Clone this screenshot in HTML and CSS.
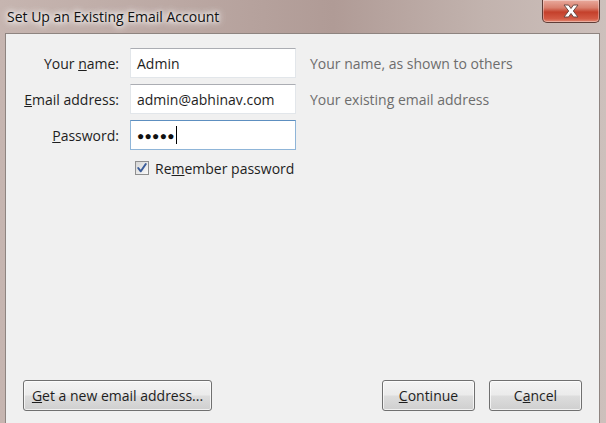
FILE: index.html
```html
<!DOCTYPE html>
<html>
<head>
<meta charset="utf-8">
<link rel="stylesheet" href="styles.css">
</head>
<body>
<div class="window">
  <div class="titlebar">
    <div class="title">Set Up an Existing Email Account</div>
    <div class="close">
      <svg width="20" height="14" viewBox="0 0 20 14">
        <path d="M3 1 H7.5 L10 4.5 L12.5 1 H17 L12.3 7 L17 13 H12.5 L10 9.5 L7.5 13 H3 L7.7 7 Z" fill="#ffffff" stroke="#6a4a44" stroke-width="1" stroke-linejoin="round"/>
      </svg>
    </div>
  </div>
  <div class="frame">
    <div class="panel">
      <div class="form">
        <label class="label">Your <u>n</u>ame:</label>
        <div class="input">Admin</div>
        <div class="hint">Your name, as shown to others</div>

        <label class="label"><u>E</u>mail address:</label>
        <div class="input">admin@abhinav.com</div>
        <div class="hint">Your existing email address</div>

        <label class="label"><u>P</u>assword:</label>
        <div class="input focus"><span class="dots">●●●●●</span><span class="caret"></span></div>
        <div class="hint"></div>

        <div class="empty"></div>
        <div class="check-row">
          <span class="checkbox">
            <svg width="14" height="14" viewBox="0 0 14 14">
              <path d="M3.2 7 L5.8 10.3 L10.8 3" fill="none" stroke="#3a5c9a" stroke-width="2" stroke-linecap="round" stroke-linejoin="round"/>
            </svg>
          </span>
          <span class="check-label">Re<u>m</u>ember password</span>
        </div>
      </div>
      <div class="buttons">
        <button class="btn wide"><u>G</u>et a new email address...</button>
        <div class="right">
          <button class="btn"><u>C</u>ontinue</button>
          <button class="btn">C<u>a</u>ncel</button>
        </div>
      </div>
    </div>
  </div>
</div>
</body>
</html>
```
FILE: styles.css
```css
html, body {
  margin: 0;
  padding: 0;
}
body {
  width: 606px;
  height: 423px;
  overflow: hidden;
  font-family: "Open Sans", "Noto Sans", sans-serif;
  font-size: 14px;
  color: #1e1e1e;
}
.window {
  width: 606px;
  height: 423px;
  display: flex;
  flex-direction: column;
  background: linear-gradient(90deg, #c6b5b0 0%, #bba8a3 30%, #b09b96 55%, #c2b3ae 80%, #cdc0bc 100%);
}
.titlebar {
  height: 33px;
  display: flex;
  align-items: flex-start;
  flex-shrink: 0;
}
.title {
  margin-left: 7px;
  margin-top: 7px;
  font-size: 14px;
  color: #111;
  text-shadow: 0 0 8px #fff, 0 0 8px #fff, 0 0 4px #fff;
}
.close {
  margin-left: auto;
  margin-right: 6px;
  width: 56px;
  height: 22px;
  border: 1px solid #5e3d37;
  border-top: none;
  border-radius: 0 0 5px 5px;
  background: linear-gradient(180deg, #e9aa9d 0%, #d9806e 35%, #c4402b 55%, #d35a44 85%, #e38a74 100%);
  display: flex;
  align-items: center;
  justify-content: center;
  box-shadow: inset 0 0 0 1px rgba(255,255,255,0.35);
}
.frame {
  flex: 1;
  padding: 0 6px 0 5px;
  display: flex;
}
.panel {
  flex: 1;
  border: 1px solid #8e8480;
  border-bottom: none;
  background: #f0f0f0;
  display: flex;
  flex-direction: column;
}
.form {
  display: grid;
  grid-template-columns: 113px 166px auto;
  column-gap: 11px;
  row-gap: 6px;
  padding-top: 14px;
  align-items: center;
}
.label {
  text-align: right;
}
.input {
  box-sizing: border-box;
  height: 30px;
  background: #fff;
  border: 1px solid #e2e6ea;
  border-top-color: #abadb3;
  padding: 0 6px;
  display: flex;
  align-items: center;
}
.input.focus {
  border-color: #8fb5d8;
  border-top-color: #5d8fc0;
}
.dots {
  font-size: 12px;
  letter-spacing: 0.3px;
  color: #111;
  padding-top: 1px;
}
.caret {
  width: 1px;
  height: 18px;
  background: #000;
  margin-left: 1px;
}
.hint {
  color: #6d6d6d;
  margin-left: 3px;
}
.check-row {
  grid-column: 2 / 4;
  display: flex;
  align-items: center;
  padding-left: 5px;
  height: 24px;
}
.checkbox {
  box-sizing: border-box;
  width: 14px;
  height: 14px;
  border: 1px solid #8f8f8f;
  background: linear-gradient(135deg, #d6d6d6, #fafafa);
  display: flex;
  margin-right: 6px;
}
.checkbox svg {
  margin: -1px;
}
.buttons {
  margin-top: auto;
  display: flex;
  justify-content: space-between;
  padding: 0 17px 12px 17px;
}
.right {
  display: flex;
  gap: 14px;
}
.btn {
  font-family: inherit;
  font-size: 14px;
  color: #1e1e1e;
  height: 31px;
  width: 93px;
  border: 1px solid #707070;
  border-radius: 3px;
  background: linear-gradient(180deg, #f4f4f4 0%, #ebebeb 48%, #dddddd 52%, #cfcfcf 100%);
  box-shadow: inset 0 0 0 1px rgba(255,255,255,0.7);
  padding: 0;
}
.btn.wide {
  width: 189px;
}
```
